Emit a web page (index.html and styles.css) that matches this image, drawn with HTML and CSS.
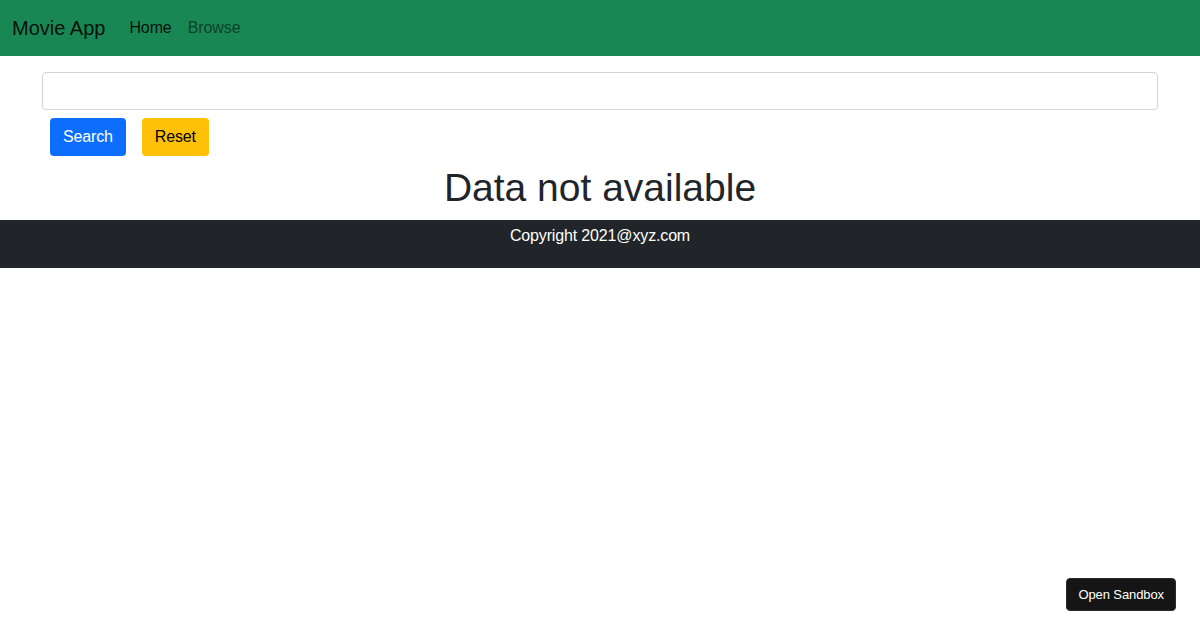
FILE: index.html
```html
<!DOCTYPE html>
<html>
<head>
    <title>Movie App</title>
    <link rel="stylesheet" href="styles.css">
</head>
<body>
    <nav class="navbar">
        <a class="brand" href="#">Movie App</a>
        <a class="nav-link active" href="#">Home</a>
        <a class="nav-link" href="#">Browse</a>
    </nav>

    <div class="search-box">
        <input type="text" class="search-input">
        <div class="actions">
            <button class="btn btn-primary">Search</button>
            <button class="btn btn-warning">Reset</button>
        </div>
    </div>

    <h1 class="message">Data not available</h1>

    <footer class="footer">Copyright 2021@xyz.com</footer>

    <a class="sandbox" href="#">Open Sandbox</a>
</body>
</html>
```

FILE: styles.css
```css
body { margin: 0; font-family: "Liberation Sans", Arial, sans-serif; font-size: 16px; line-height: 1.5; color: #212529; background: #fff; }
a { text-decoration: none; }
.navbar { display: flex; align-items: center; height: 56px; padding: 0 12px; background-color: #198754; box-sizing: border-box; }
.brand { font-size: 20px; color: rgba(0, 0, 0, .9); margin-right: 16px; }
.nav-link { padding: 8px; color: rgba(0, 0, 0, .55); letter-spacing: -0.1px; }
.nav-link.active { color: rgba(0, 0, 0, .9); }
.search-box { margin: 16px 42px 0; }
.search-input { display: block; width: 100%; height: 38px; box-sizing: border-box; border: 1px solid #ced4da; border-radius: 4px; padding: 6px 12px; font: inherit; }
.actions { display: flex; }
.btn { margin: 8px; height: 38px; padding: 6px 12px; border: 1px solid transparent; border-radius: 4px; font: inherit; letter-spacing: -0.15px; cursor: pointer; }
.btn-primary { background-color: #0d6efd; color: #fff; }
.btn-warning { background-color: #ffc107; color: #000; }
.message { margin: 0 0 8px; font-size: 39px; font-weight: 400; line-height: 48px; text-align: center; }
.footer { height: 48px; box-sizing: border-box; padding-top: 4px; background-color: #212529; color: #fff; text-align: center; letter-spacing: -0.15px; }
.sandbox { position: fixed; right: 24px; bottom: 19px; padding: 8px 11px; background: #151515; color: #fff; font-size: 13px; line-height: 15px; letter-spacing: -0.1px; border-radius: 4px; border: 1px solid #2a2a2a; }
```
